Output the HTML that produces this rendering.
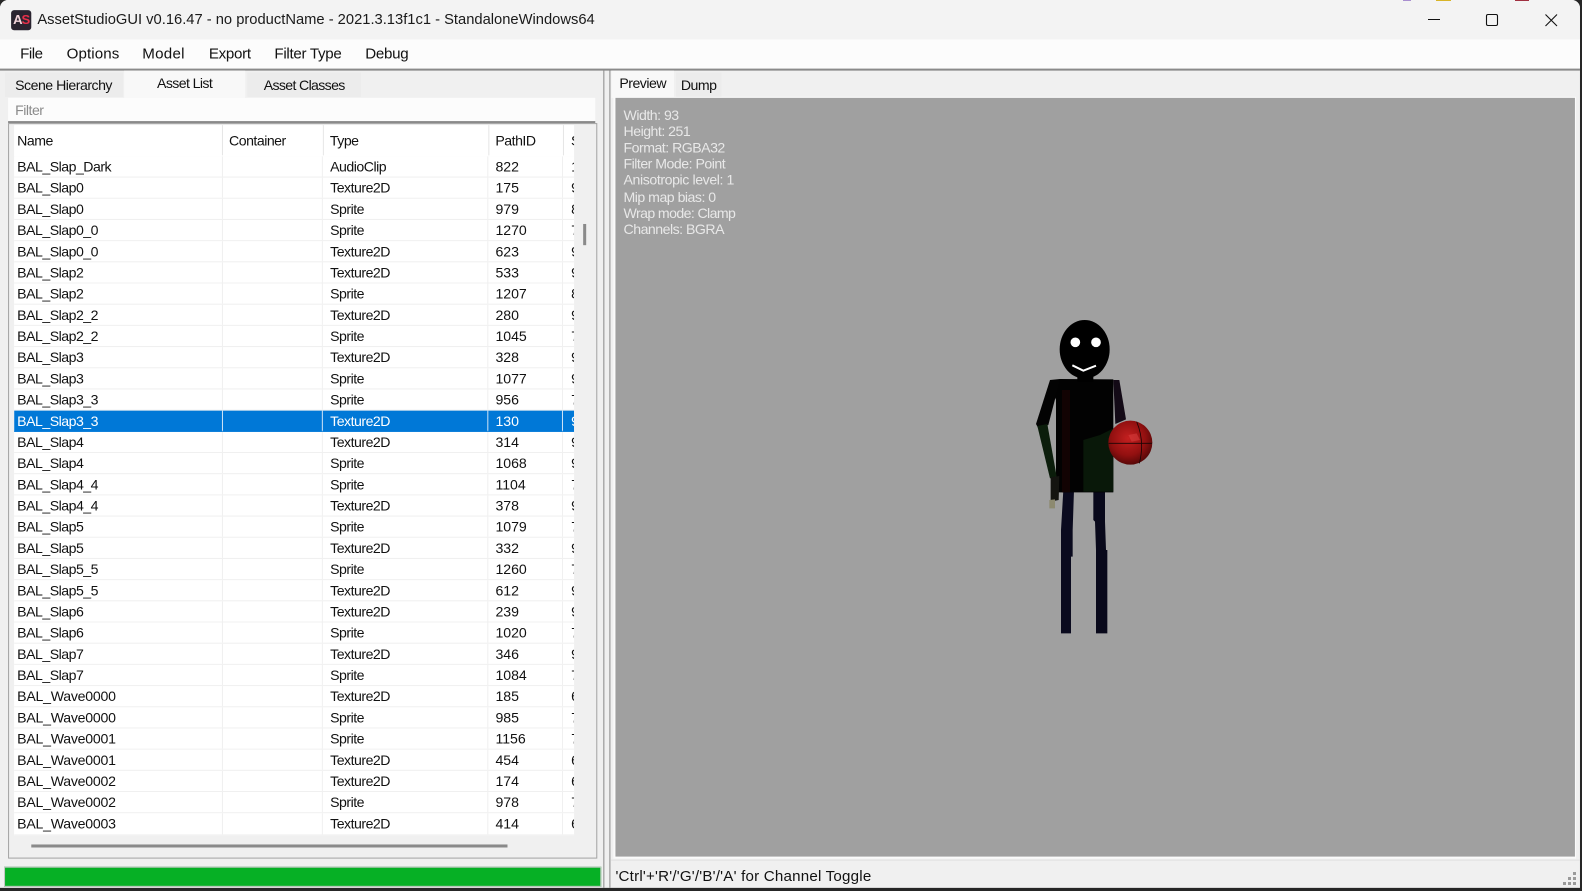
<!DOCTYPE html>
<html><head><meta charset="utf-8"><title>AssetStudioGUI</title>
<style>
html,body{margin:0;padding:0;width:1582px;height:891px;overflow:hidden;background:#262626}
*{box-sizing:border-box}
#s{position:absolute;left:0;top:0;width:1568px;height:883px;transform:scale(1.00893);transform-origin:0 0;font:14px "Liberation Sans",sans-serif;color:#111;letter-spacing:-.5px}
#w{position:absolute;left:0;top:0;width:1566px;height:880px;background:#f0f0f0;border-radius:8px 8px 0 0;overflow:hidden}
.a{position:absolute;white-space:nowrap}
#list{position:absolute;left:14px;top:154.5px;width:555px;height:673px;overflow:hidden;background:#fff}
.r{height:21.04px;display:flex;border-bottom:1px solid #f0f0f0;line-height:20px}
.r span{display:block;height:100%;border-right:1px solid #f0f0f0;overflow:hidden;white-space:nowrap}
.r span:nth-child(1){width:207px;padding-left:3px}
.r span:nth-child(2){width:99.5px}
.r span:nth-child(3){width:164px;padding-left:7px}
.r span:nth-child(4){width:74px;padding-left:7px;letter-spacing:-.05px}
.r span:nth-child(5){width:11px;padding-left:8px;border:0}
.sel{background:#0078d7;color:#fff;border-bottom-color:#0078d7}
.sel span{border-right-color:#cfe4f6!important}
.h{position:absolute;top:124px;height:30px;line-height:30px}
.v{position:absolute;width:1px;background:#e6e6e6}
.m{top:44px;line-height:19px;font-size:15px}
</style></head><body>
<div id="s">
<div id="w">
 <!-- title bar and menu -->
 <div class="a" style="left:0;top:0;width:1566px;height:39px;background:#f3f3f3"></div>
 <div class="a" style="left:0;top:39px;width:1566px;height:29px;background:#fcfcfc"></div>
 <div class="a" style="left:0;top:68px;width:1566px;height:1.5px;background:#8a8a8a"></div>
 <div class="a" style="left:11px;top:10px;width:20px;height:20px;background:#2a2430;border-radius:3px;font:bold 13px/20px 'Liberation Sans',sans-serif;text-align:center;letter-spacing:-1px;color:#e8304a"><span style="color:#f2d4da">A</span>S</div>
 <div class="a" style="left:37px;top:10px;line-height:21px;font-size:14.6px;letter-spacing:0;color:#1a1a1a">AssetStudioGUI v0.16.47 - no productName - 2021.3.13f1c1 - StandaloneWindows64</div>
 <div class="a m" style="left:20px">File</div>
 <div class="a m" style="left:66px;letter-spacing:.1px">Options</div>
 <div class="a m" style="left:141px;letter-spacing:.25px">Model</div>
 <div class="a m" style="left:207px;letter-spacing:-.3px">Export</div>
 <div class="a m" style="left:272px;letter-spacing:-.3px">Filter Type</div>
 <div class="a m" style="left:362px;letter-spacing:-.3px">Debug</div>

 <!-- left pane -->
 <div class="a" style="left:597.5px;top:69px;width:1px;height:811px;background:#8a8a8a"></div>
 <div class="a" style="left:603.5px;top:69px;width:1px;height:811px;background:#8a8a8a"></div>
 <div class="a" style="left:5px;top:72px;width:117px;height:24px;background:#ececec;line-height:25px;padding-left:10px">Scene Hierarchy</div>
 <div class="a" style="left:123px;top:70px;width:120px;height:27px;background:#f8f8f8;line-height:24px;text-align:center;letter-spacing:-.6px">Asset List</div>
 <div class="a" style="left:245px;top:72px;width:113px;height:24px;background:#ececec;line-height:25px;text-align:center;letter-spacing:-.65px">Asset Classes</div>
 <div class="a" style="left:8px;top:97px;width:582px;height:25px;background:#fcfcfc;border-bottom:2px solid #8a8a8a;line-height:24px;padding-left:7px;color:#8b8b8b">Filter</div>

 <div class="a" style="left:8px;top:122px;width:584px;height:729px;border:1px solid #a3a3a3;background:#f0f0f0"></div>
 <div class="a" style="left:14px;top:124px;width:555px;height:31px;background:#fff"></div>
 <div class="h" style="left:17px">Name</div>
 <div class="h" style="left:227px">Container</div>
 <div class="h" style="left:327px">Type</div>
 <div class="h" style="left:491px">PathID</div>
 <div class="h" style="left:566px;width:3px;overflow:hidden">Size</div>
 <div class="v" style="left:220px;top:124px;height:30px"></div>
 <div class="v" style="left:319.5px;top:124px;height:30px"></div>
 <div class="v" style="left:483.5px;top:124px;height:30px"></div>
 <div class="v" style="left:557.5px;top:124px;height:30px"></div>

 <div id="list">
 <div class="r"><span>BAL_Slap_Dark</span><span></span><span>AudioClip</span><span>822</span><span>1</span></div>
 <div class="r"><span>BAL_Slap0</span><span></span><span>Texture2D</span><span>175</span><span>9</span></div>
 <div class="r"><span>BAL_Slap0</span><span></span><span>Sprite</span><span>979</span><span>8</span></div>
 <div class="r"><span>BAL_Slap0_0</span><span></span><span>Sprite</span><span>1270</span><span>7</span></div>
 <div class="r"><span>BAL_Slap0_0</span><span></span><span>Texture2D</span><span>623</span><span>9</span></div>
 <div class="r"><span>BAL_Slap2</span><span></span><span>Texture2D</span><span>533</span><span>9</span></div>
 <div class="r"><span>BAL_Slap2</span><span></span><span>Sprite</span><span>1207</span><span>8</span></div>
 <div class="r"><span>BAL_Slap2_2</span><span></span><span>Texture2D</span><span>280</span><span>9</span></div>
 <div class="r"><span>BAL_Slap2_2</span><span></span><span>Sprite</span><span>1045</span><span>7</span></div>
 <div class="r"><span>BAL_Slap3</span><span></span><span>Texture2D</span><span>328</span><span>9</span></div>
 <div class="r"><span>BAL_Slap3</span><span></span><span>Sprite</span><span>1077</span><span>9</span></div>
 <div class="r"><span>BAL_Slap3_3</span><span></span><span>Sprite</span><span>956</span><span>7</span></div>
 <div class="r sel"><span>BAL_Slap3_3</span><span></span><span>Texture2D</span><span>130</span><span>9</span></div>
 <div class="r"><span>BAL_Slap4</span><span></span><span>Texture2D</span><span>314</span><span>9</span></div>
 <div class="r"><span>BAL_Slap4</span><span></span><span>Sprite</span><span>1068</span><span>9</span></div>
 <div class="r"><span>BAL_Slap4_4</span><span></span><span>Sprite</span><span>1104</span><span>7</span></div>
 <div class="r"><span>BAL_Slap4_4</span><span></span><span>Texture2D</span><span>378</span><span>9</span></div>
 <div class="r"><span>BAL_Slap5</span><span></span><span>Sprite</span><span>1079</span><span>7</span></div>
 <div class="r"><span>BAL_Slap5</span><span></span><span>Texture2D</span><span>332</span><span>9</span></div>
 <div class="r"><span>BAL_Slap5_5</span><span></span><span>Sprite</span><span>1260</span><span>7</span></div>
 <div class="r"><span>BAL_Slap5_5</span><span></span><span>Texture2D</span><span>612</span><span>9</span></div>
 <div class="r"><span>BAL_Slap6</span><span></span><span>Texture2D</span><span>239</span><span>9</span></div>
 <div class="r"><span>BAL_Slap6</span><span></span><span>Sprite</span><span>1020</span><span>7</span></div>
 <div class="r"><span>BAL_Slap7</span><span></span><span>Texture2D</span><span>346</span><span>9</span></div>
 <div class="r"><span>BAL_Slap7</span><span></span><span>Sprite</span><span>1084</span><span>7</span></div>
 <div class="r"><span style="letter-spacing:-.25px">BAL_Wave0000</span><span></span><span>Texture2D</span><span>185</span><span>6</span></div>
 <div class="r"><span style="letter-spacing:-.25px">BAL_Wave0000</span><span></span><span>Sprite</span><span>985</span><span>7</span></div>
 <div class="r"><span style="letter-spacing:-.25px">BAL_Wave0001</span><span></span><span>Sprite</span><span>1156</span><span>7</span></div>
 <div class="r"><span style="letter-spacing:-.25px">BAL_Wave0001</span><span></span><span>Texture2D</span><span>454</span><span>6</span></div>
 <div class="r"><span style="letter-spacing:-.25px">BAL_Wave0002</span><span></span><span>Texture2D</span><span>174</span><span>6</span></div>
 <div class="r"><span style="letter-spacing:-.25px">BAL_Wave0002</span><span></span><span>Sprite</span><span>978</span><span>7</span></div>
 <div class="r"><span style="letter-spacing:-.25px">BAL_Wave0003</span><span></span><span>Texture2D</span><span>414</span><span>6</span></div>
 </div>
 <div class="a" style="left:578px;top:222px;width:3px;height:21px;background:#8a8a8a"></div>
 <div class="a" style="left:31px;top:837px;width:472px;height:3px;background:#8a8a8a"></div>

 <div class="a" style="left:4px;top:859px;width:592px;height:20px;background:#06b025;border:1px solid #c8c8c8"></div>

 <!-- right pane -->
 <div class="a" style="left:606px;top:70px;width:62px;height:27px;background:#f8f8f8;line-height:24px;text-align:center">Preview</div>
 <div class="a" style="left:670px;top:72px;width:45px;height:24px;background:#ececec;line-height:25px;text-align:center">Dump</div>
 <div class="a" style="left:608px;top:96px;width:954px;height:755px;background:#fafafa"></div>
 <div class="a" style="left:610px;top:97px;width:951px;height:752px;background:#a0a0a0"></div>
 <div class="a" style="left:618px;top:105.5px;line-height:16.2px;color:#e8e8e8">Width: 93<br>Height: 251<br>Format: RGBA32<br>Filter Mode: Point<br><span style="letter-spacing:-.4px">Anisotropic level: 1</span><br>Mip map bias: 0<br><span style="letter-spacing:-.6px">Wrap mode: Clamp</span><br>Channels: BGRA</div>
 <div class="a" style="left:605px;top:852px;width:961px;height:1px;background:#e0e0e0"></div>
 <div class="a" style="left:610px;top:859px;line-height:19px;font-size:15px;letter-spacing:.2px">'Ctrl'+'R'/'G'/'B'/'A' for Channel Toggle</div>
</div>
</div>

<!-- character, real pixel coordinates -->
<svg style="position:absolute;left:1000px;top:300px" width="200" height="350" viewBox="0 0 600 1050">
 <defs><radialGradient id="b" cx=".45" cy=".4" r=".65"><stop offset="0" stop-color="#c42020"/><stop offset=".6" stop-color="#921010"/><stop offset="1" stop-color="#4a0606"/></radialGradient></defs>
 <polygon points="190,570 222,570 218,690 218,770 213,770 213,1000 183,1000 183,690" fill="#0a0a1e"/>
 <polygon points="280,570 315,570 315,665 318,750 322,750 322,1000 288,1000 288,750 285,665 280,660" fill="#08081a"/>
 <polygon points="150,240 180,237 340,238 340,577 168,577 168,300" fill="#020202"/>
 <rect x="186" y="270" width="24" height="307" fill="#120303"/>
 <polygon points="250,420 300,405 340,385 340,575 250,575" fill="#091809"/>
 <polygon points="150,240 180,240 145,375 115,385 108,372" fill="#030303"/>
 <polygon points="112,378 142,372 170,530 150,535" fill="#0b1d0b"/>
 <polygon points="152,532 178,528 176,600 152,605" fill="#141410"/>
 <polygon points="148,600 165,598 165,625 148,625" fill="#8d8a70"/>
 <polygon points="340,240 358,240 378,358 346,372" fill="#130a16"/>
 <ellipse cx="254" cy="148" rx="75" ry="88" fill="#000"/>
 <rect x="232" y="200" width="48" height="45" fill="#000"/>
 <circle cx="226" cy="127" r="14.5" fill="#fff"/>
 <circle cx="288" cy="127" r="14.5" fill="#fff"/>
 <polyline points="217,196 250,212 288,197" fill="none" stroke="#fff" stroke-width="6"/>
 <circle cx="391" cy="428" r="66" fill="url(#b)"/>
 <path d="M326 430H456M410 365Q435 425 418 490" fill="none" stroke="#1a0505" stroke-width="2.5"/>
 <polygon points="385,405 410,400 420,420 395,425" fill="#d84040" opacity=".55"/>
</svg>

<!-- window controls and grip, real pixel coordinates -->
<svg style="position:absolute;left:0;top:0" width="1582" height="891" viewBox="0 0 1582 891" fill="none">
 <path d="M1428 19.5H1440" stroke="#111" stroke-width="1"/>
 <rect x="1486.5" y="14.5" width="11" height="11" rx="1.5" stroke="#111" stroke-width="1.1"/>
 <path d="M1545.5 14.5L1557 26M1557 14.5L1545.5 26" stroke="#111" stroke-width="1.1"/>
 <g fill="#9a9a9a"><rect x="1573" y="872" width="3" height="3"/><rect x="1573" y="877" width="3" height="3"/><rect x="1568" y="877" width="3" height="3"/><rect x="1573" y="882" width="3" height="3"/><rect x="1568" y="882" width="3" height="3"/><rect x="1563" y="882" width="3" height="3"/></g>
 <rect x="1403" y="0" width="8" height="1" fill="#a98fd0"/><rect x="1436" y="0" width="15" height="1" fill="#d8b428"/><rect x="1515" y="0" width="14" height="1" fill="#a03040"/>
</svg>
</body></html>
